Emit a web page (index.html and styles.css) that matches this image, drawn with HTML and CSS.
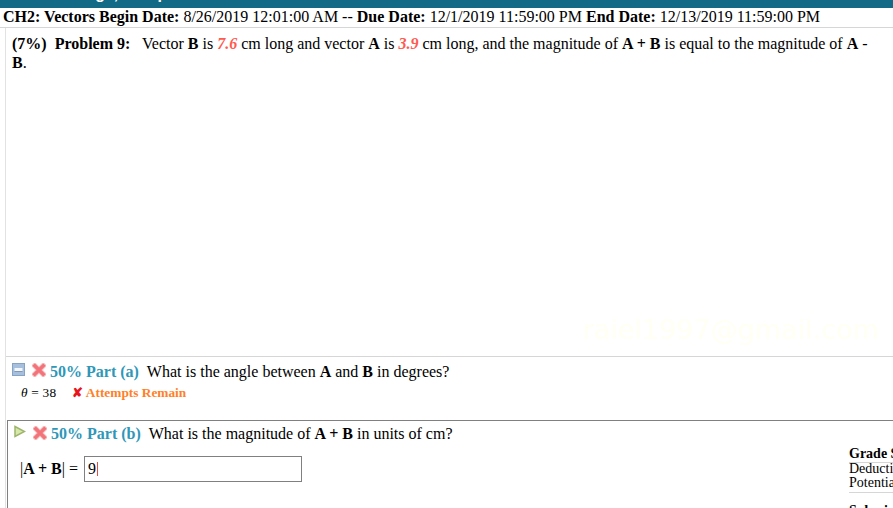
FILE: index.html
```html
<!DOCTYPE html>
<html lang="en">
<head>
  <meta charset="UTF-8" />
  <title>CH2: Vectors</title>
  <link rel="stylesheet" href="styles.css">
</head>
<body>
  <div class="topbar"><span class="topbar-text">Course Page, Setup</span></div>

  <div class="assignment">
    <b>CH2: Vectors</b> <b>Begin Date:</b> 8/26/2019 12:01:00 AM -- <b>Due Date:</b> 12/1/2019 11:59:00 PM <b>End Date:</b> 12/13/2019 11:59:00 PM
  </div>

  <div class="sheet">
    <div class="problem">
      <p class="problem-text"><b>(7%)&nbsp; Problem 9:</b>&nbsp;&nbsp; Vector <b>B</b> is <b class="given">7.6</b> cm long and vector <b>A</b> is <b class="given">3.9</b> cm long, and the magnitude of <b>A + B</b> is equal to the magnitude of <b>A</b> - <b>B</b>.</p>
      <div class="watermark">raiel1997@gmail.com</div>
    </div>

    <div class="part part-a">
      <div class="part-head">
        <svg class="toggle" width="13" height="13" viewBox="0 0 13 13">
          <rect x="0.5" y="0.5" width="12" height="12" fill="#a5bfdc" stroke="#86a3c6"/>
          <rect x="2.5" y="5" width="8" height="3" fill="#f4f7fb"/>
          <rect x="2.5" y="8" width="8" height="1" fill="#7f97b8"/>
        </svg>
        <svg class="cross" width="14" height="14" viewBox="0 0 14 14">
          <path d="M2.8 2.8 L11.2 11.2 M11.2 2.8 L2.8 11.2" stroke="#f6c2c2" stroke-width="5.4" stroke-linecap="square"/>
          <path d="M2.8 2.8 L11.2 11.2 M11.2 2.8 L2.8 11.2" stroke="#f2737a" stroke-width="3.4" stroke-linecap="square"/>
        </svg>
        <span class="part-label">50% Part (a)</span>
        <span class="part-q">What is the angle between <b>A</b> and <b>B</b> in degrees?</span>
      </div>
      <div class="attempt">
        <span class="attempt-val"><i>θ</i> = 38</span>
        <span class="remain"><span class="remain-x">✘</span> Attempts Remain</span>
      </div>
    </div>

    <div class="part part-b">
      <div class="part-head">
        <svg class="toggle" width="13" height="13" viewBox="0 0 13 13">
          <path d="M2 1.5 L11.5 6.5 L2 11.5 Z" fill="#d8e8a8" stroke="#9db56e" stroke-width="1.5"/>
        </svg>
        <svg class="cross" width="14" height="14" viewBox="0 0 14 14">
          <path d="M2.8 2.8 L11.2 11.2 M11.2 2.8 L2.8 11.2" stroke="#f6c2c2" stroke-width="5.4" stroke-linecap="square"/>
          <path d="M2.8 2.8 L11.2 11.2 M11.2 2.8 L2.8 11.2" stroke="#f2737a" stroke-width="3.4" stroke-linecap="square"/>
        </svg>
        <span class="part-label">50% Part (b)</span>
        <span class="part-q">What is the magnitude of <b>A + B</b> in units of cm?</span>
      </div>
      <div class="answer-row">
        <div class="answer">
          <span class="answer-label">|<b>A + B</b>| =</span>
          <div class="answer-box">9<span class="caret"></span></div>
        </div>
        <div class="grade">
          <div class="grade-title">Grade Summary</div>
          <div class="grade-rows">Deductions<br>Potential</div>
          <div class="grade-sub">Submissions</div>
        </div>
      </div>
    </div>
  </div>
</body>
</html>
```

FILE: styles.css
```css
html, body {
  height: 100%;
}

body {
  margin: 0;
  overflow: hidden;
  background: #fff;
  color: #000;
  font-family: "Liberation Serif", "Times New Roman", serif;
  font-size: 16px;
}

.topbar {
  height: 8px;
  background: #126a86;
  overflow: hidden;
}

.topbar-text {
  display: block;
  margin: -15px 0 0 16px;
  color: #fff;
  font-size: 16px;
  font-family: "Liberation Sans", sans-serif;
  font-weight: bold;
  line-height: 18px;
}

.assignment {
  height: 19px;
  padding-left: 3px;
  line-height: 17px;
  white-space: nowrap;
  border-bottom: 1px solid #d6d6d6;
}

.sheet {
  margin-left: 5px;
  border-left: 1px solid #e2e2e2;
}

.problem {
  position: relative;
  height: 329px;
  padding: 6px 20px 0 6px;
  box-sizing: border-box;
  border-bottom: 1px solid #d6d6d6;
}

.problem-text {
  margin: 0;
  line-height: 19px;
}

.given {
  color: #ff5a4f;
  font-style: italic;
}

.watermark {
  position: absolute;
  top: 286px;
  left: 577px;
  color: #fffff4;
  font-family: "DejaVu Sans", sans-serif;
  font-size: 27px;
  white-space: nowrap;
}

.part {
  padding-left: 6px;
}

.part-a {
  height: 63px;
}

.part-b {
  margin-left: 1px;
  padding-left: 5px;
  border-top: 1px solid #808080;
  border-left: 1px solid #808080;
}

.part-head {
  display: flex;
  align-items: center;
  height: 30px;
}

.part-b .part-head {
  height: 26px;
}

.toggle {
  flex: none;
  margin-right: 7px;
}

.part-a .toggle,
.part-a .cross {
  margin-top: -5px;
}

.part-b .toggle {
  margin-top: -5px;
}

.part-b .cross {
  margin-top: -3px;
}

.cross {
  flex: none;
  margin-right: 4px;
}

.part-label {
  margin-right: 8px;
  color: #2f97b8;
  font-weight: bold;
  font-size: 16px;
}

.part-q {
  white-space: nowrap;
}

.attempt {
  display: flex;
  gap: 16px;
  margin-top: -3px;
  padding-left: 9px;
  font-size: 13.33px;
  line-height: 18px;
}

.attempt-val {
  letter-spacing: 0.2px;
}

.remain {
  color: #ff8028;
  font-weight: bold;
}

.remain-x {
  color: #e8141c;
}

.answer-row {
  display: flex;
  justify-content: space-between;
  padding-top: 9px;
}

.answer {
  display: flex;
  align-items: flex-start;
  gap: 6px;
  padding-left: 7px;
}

.answer-label {
  line-height: 26px;
}

.answer-box {
  width: 213px;
  height: 24px;
  border: 1px solid #808080;
  padding-left: 3px;
  line-height: 23px;
}

.caret {
  display: inline-block;
  width: 1px;
  height: 14px;
  margin-left: 1px;
  vertical-align: -2px;
  background: #e0503c;
}

.grade {
  flex: none;
  width: 44px;
  margin-top: -10px;
  overflow: hidden;
  font-size: 14px;
  white-space: nowrap;
}

.grade-title {
  font-weight: bold;
  line-height: 16px;
  border-bottom: 1px solid #d6d6d6;
}

.grade-rows {
  margin-top: -1px;
  line-height: 14px;
  border-bottom: 1px solid #d6d6d6;
  padding-bottom: 2px;
}

.grade-sub {
  margin-top: 10px;
  font-weight: bold;
  line-height: 15px;
}
```
